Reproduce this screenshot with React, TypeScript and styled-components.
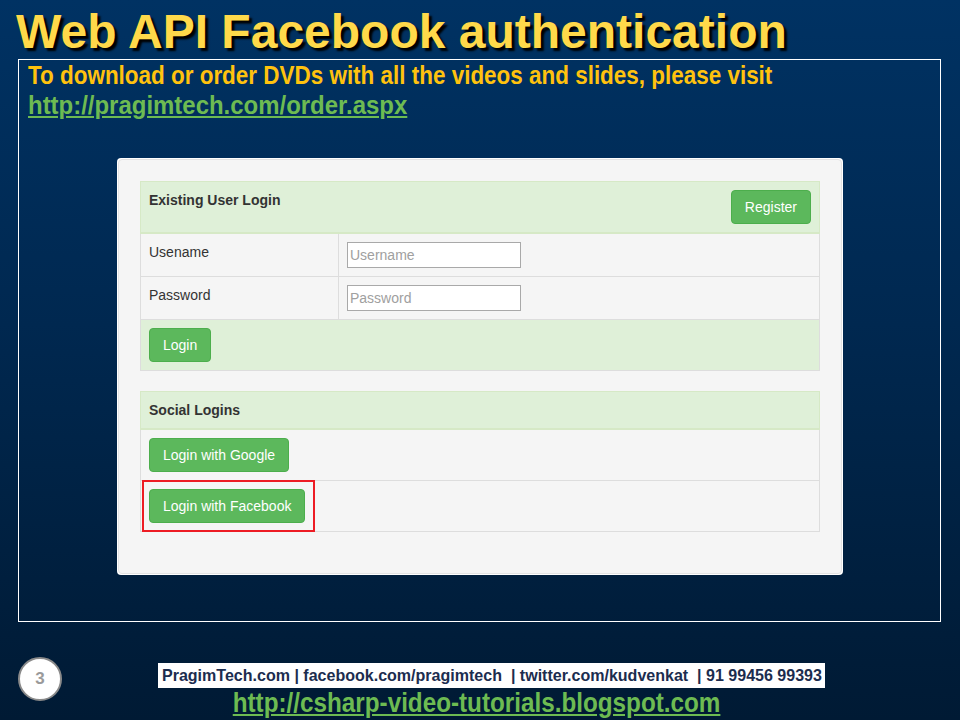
import styled, { createGlobalStyle } from 'styled-components';

const GlobalStyle = createGlobalStyle`
	html, body {
		margin: 0;
		padding: 0;
		background: #001a35;
	}
	body {
		font-family: "Liberation Sans", Arial, sans-serif;
	}
`;

const Slide = styled.div`
	width: 960px;
	height: 720px;
	overflow: hidden;
	background: linear-gradient(180deg, #003263 0%, #002850 45%, #001a34 100%);
	display: flex;
	flex-direction: column;
`;

const Title = styled.h1`
	margin: 0;
	padding: 8px 0 0 16px;
	height: 59px;
	box-sizing: border-box;
	font-family: "Liberation Sans", Arial, sans-serif;
	font-weight: bold;
	font-size: 48px;
	line-height: 48px;
	color: #ffd94a;
	text-shadow: 3px 3px 2px #000;
	white-space: nowrap;
`;

const Frame = styled.div`
	margin: 0 19px 0 18px;
	height: 563px;
	border: 1px solid #fff;
	box-sizing: border-box;
	padding: 1px 0 0 9px;
	display: flex;
	flex-direction: column;
`;

const Squeeze = styled.span<{ $sx: number; $origin?: string }>`
	display: inline-block;
	white-space: nowrap;
	text-decoration: inherit;
	transform: scaleX(${(p) => p.$sx});
	transform-origin: ${(p) => p.$origin ?? 'left'} center;
`;

const Notice = styled.div`
	font-weight: bold;
	font-size: 25px;
	line-height: 28px;
	color: #ffc20e;
`;

const OrderLink = styled.a`
	display: block;
	font-weight: bold;
	font-size: 25px;
	line-height: 28px;
	color: #6dbb52;
	text-decoration: underline;
	margin-top: 2px;
`;

const Card = styled.div`
	margin: 39px 0 0 89px;
	width: 726px;
	height: 417px;
	box-sizing: border-box;
	background: #fff;
	padding: 1px;
	border-radius: 4px;
`;

const Well = styled.div`
	height: 100%;
	box-sizing: border-box;
	background: #f5f5f5;
	border: 1px solid #e3e3e3;
	border-radius: 4px;
	padding: 21px 21px 0 21px;
	font-family: "Liberation Sans", Arial, sans-serif;
	font-size: 14px;
	color: #333;
`;

const Table = styled.table`
	width: 680px;
	border-collapse: collapse;
	margin-bottom: 20px;
	line-height: 20px;
`;

const HeadCell = styled.th`
	background: #dff0d8;
	border: 1px solid #d6e9c6;
	border-bottom-width: 2px;
	padding: 8px;
	text-align: left;
	vertical-align: top;
	font-weight: bold;
`;

const Cell = styled.td<{ $green?: boolean; $width?: number }>`
	background: ${(p) => (p.$green ? '#dff0d8' : '#f5f5f5')};
	border: 1px solid #ddd;
	padding: 8px;
	vertical-align: top;
	width: ${(p) => (p.$width ? `${p.$width}px` : 'auto')};
	position: relative;
`;

const Button = styled.button<{ $right?: boolean }>`
	float: ${(p) => (p.$right ? 'right' : 'none')};
	display: inline-block;
	background: #5cb85c;
	border: 1px solid #4cae4c;
	border-radius: 4px;
	color: #fff;
	font-family: "Liberation Sans", Arial, sans-serif;
	font-size: 14px;
	line-height: 20px;
	padding: 6px 13px;
	margin: 0;
	font-weight: normal;
`;

const Input = styled.input`
	width: 174px;
	height: 26px;
	box-sizing: border-box;
	border: 1px solid #a9a9a9;
	padding: 1px 2px;
	font-family: "Liberation Sans", Arial, sans-serif;
	font-size: 14px;
	background: #fff;
	display: block;
	&::placeholder {
		color: #a0a0a0;
	}
`;

const Highlight = styled.span`
	position: absolute;
	left: 1px;
	top: -1px;
	width: 173px;
	height: 52px;
	box-sizing: border-box;
	border: 2px solid #ed1c24;
	pointer-events: none;
`;

const Footer = styled.div`
	flex: 1;
	position: relative;
	display: flex;
	flex-direction: column;
	align-items: center;
	padding-top: 41px;
`;

const PageNo = styled.div`
	position: absolute;
	left: 18px;
	top: 35px;
	width: 44px;
	height: 44px;
	box-sizing: border-box;
	border-radius: 50%;
	background: #fff;
	border: 2px solid #8a8a8a;
	display: flex;
	align-items: center;
	justify-content: center;
	font-weight: bold;
	font-size: 17px;
	color: #9a9a9a;
`;

const Contacts = styled.div`
	background: #fff;
	width: 667px;
	height: 25px;
	margin-left: 23px;
	display: flex;
	align-items: center;
	justify-content: center;
	font-weight: bold;
	font-size: 17px;
	color: #1c2d4f;
`;

const BlogLink = styled.a`
	font-weight: bold;
	font-size: 28px;
	line-height: 30px;
	color: #6dbb52;
	text-decoration: underline;
	margin-left: -6px;
`;

export default function App() {
	return (
		<>
			<GlobalStyle />
			<Slide>
				<Title>Web API Facebook authentication</Title>
				<Frame>
					<Notice>
						<Squeeze $sx={0.898}>To download or order DVDs with all the videos and slides, please visit</Squeeze>
					</Notice>
					<OrderLink href="#">
						<Squeeze $sx={0.958}>http://pragimtech.com/order.aspx</Squeeze>
					</OrderLink>
					<Card>
						<Well>
							<Table>
								<thead>
									<tr>
										<HeadCell colSpan={2}>
											Existing User Login
											<Button $right>Register</Button>
										</HeadCell>
									</tr>
								</thead>
								<tbody>
									<tr>
										<Cell $width={181}>Usename</Cell>
										<Cell><Input placeholder="Username" /></Cell>
									</tr>
									<tr>
										<Cell $width={181}>Password</Cell>
										<Cell><Input type="password" placeholder="Password" /></Cell>
									</tr>
									<tr>
										<Cell $green colSpan={2}><Button>Login</Button></Cell>
									</tr>
								</tbody>
							</Table>
							<Table>
								<thead>
									<tr>
										<HeadCell>Social Logins</HeadCell>
									</tr>
								</thead>
								<tbody>
									<tr>
										<Cell><Button>Login with Google</Button></Cell>
									</tr>
									<tr>
										<Cell>
											<Button>Login with Facebook</Button>
											<Highlight />
										</Cell>
									</tr>
								</tbody>
							</Table>
						</Well>
					</Card>
				</Frame>
				<Footer>
					<PageNo>3</PageNo>
					<Contacts>
						<Squeeze $sx={0.943} $origin="center">PragimTech.com | facebook.com/pragimtech &nbsp;| twitter.com/kudvenkat &nbsp;| 91 99456 99393</Squeeze>
					</Contacts>
					<BlogLink href="#">
						<Squeeze $sx={0.866} $origin="center">http://csharp-video-tutorials.blogspot.com</Squeeze>
					</BlogLink>
				</Footer>
			</Slide>
		</>
	);
}
